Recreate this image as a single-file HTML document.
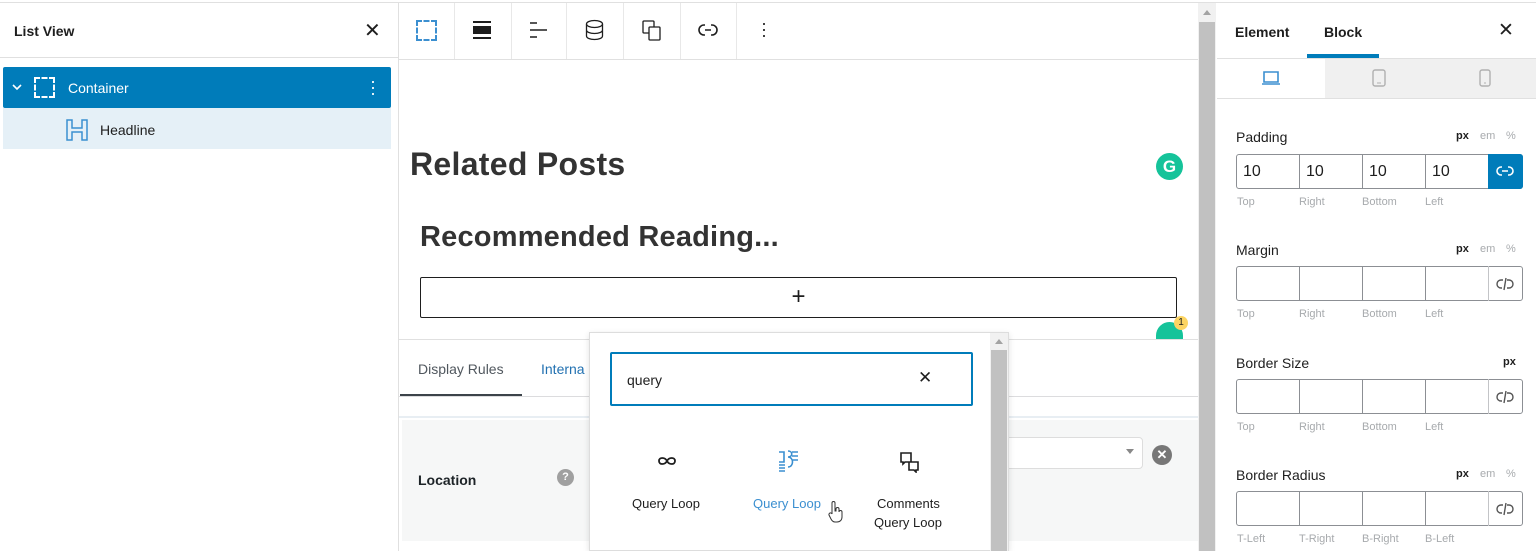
<!DOCTYPE html>
<html><head><meta charset="utf-8"><style>
*{box-sizing:border-box;margin:0;padding:0}
body{width:1536px;height:551px;overflow:hidden;background:#fff;font-family:"Liberation Sans",sans-serif;color:#1e1e1e;position:relative}
.a{position:absolute}
.lbl{position:absolute;font-size:11px;color:#a7aaad}
.unit{position:absolute;font-size:11px;color:#a7aaad}
</style></head><body>
<div class="a" style="left:0;top:2px;width:1536px;height:1px;background:#e0e0e0"></div>
<div class="a" style="left:14px;top:23px;font-size:14px;font-weight:bold;color:#1e1e1e">List View</div>
<div class="a" style="left:364px;top:18px;font-size:20px">✕</div>
<div class="a" style="left:0;top:57px;width:399px;height:1px;background:#e0e0e0"></div>
<div class="a" style="left:3px;top:67px;width:388px;height:41px;background:#007cba;border-radius:2px"></div>
<svg class="a" style="left:10px;top:80px" width="14" height="14"><path d="M3 5l4 4 4-4" stroke="#fff" stroke-width="1.6" fill="none"/></svg>
<div class="a" style="left:34px;top:77px;width:21px;height:21px;border:2px dashed #fff"></div>
<div class="a" style="left:68px;top:80px;font-size:14px;color:#fff">Container</div>
<div class="a" style="left:370px;top:78px;color:#fff;font-size:18px;line-height:6px;width:4px">·<br>·<br>·</div>
<div class="a" style="left:3px;top:108px;width:388px;height:41px;background:#e5f0f7"></div>
<svg class="a" style="left:66px;top:119px" width="22" height="22"><path d="M1 1h5v8h10V1h5v20h-5v-8H6v8H1z" stroke="#3b8fd0" stroke-width="1.5" fill="none"/></svg>
<div class="a" style="left:100px;top:122px;font-size:14px;color:#1e1e1e">Headline</div>
<div class="a" style="left:398px;top:2px;width:1px;height:549px;background:#e0e0e0"></div>
<div class="a" style="left:399px;top:59px;width:799px;height:1px;background:#e0e0e0"></div>
<div class="a" style="left:454px;top:3px;width:1px;height:56px;background:#e8e8e8"></div>
<div class="a" style="left:511px;top:3px;width:1px;height:56px;background:#e8e8e8"></div>
<div class="a" style="left:566px;top:3px;width:1px;height:56px;background:#e8e8e8"></div>
<div class="a" style="left:623px;top:3px;width:1px;height:56px;background:#e8e8e8"></div>
<div class="a" style="left:680px;top:3px;width:1px;height:56px;background:#e8e8e8"></div>
<div class="a" style="left:736px;top:3px;width:1px;height:56px;background:#e8e8e8"></div>
<div class="a" style="left:416px;top:20px;width:21px;height:21px;border:2px dashed #3b8fd0"></div>
<svg class="a" style="left:473px;top:20px" width="18" height="20"><rect x="0" y="1" width="18" height="2" fill="#1e1e1e"/><rect x="0" y="6" width="18" height="8" fill="#1e1e1e"/><rect x="0" y="17" width="18" height="2" fill="#1e1e1e"/></svg>
<svg class="a" style="left:529px;top:20px" width="18" height="20"><path d="M1 3h7M1 10h17M1 17h7" stroke="#1e1e1e" stroke-width="1.6"/></svg>
<svg class="a" style="left:585px;top:19px" width="19" height="22"><ellipse cx="9.5" cy="5" rx="8" ry="3.5" stroke="#1e1e1e" stroke-width="1.3" fill="none"/><path d="M1.5 5v12c0 2 3.5 3.5 8 3.5s8-1.5 8-3.5V5M1.5 11c0 2 3.5 3.5 8 3.5s8-1.5 8-3.5" stroke="#1e1e1e" stroke-width="1.3" fill="none"/></svg>
<svg class="a" style="left:642px;top:20px" width="20" height="21"><rect x="1" y="1" width="11" height="12" rx="1" stroke="#1e1e1e" stroke-width="1.3" fill="none"/><rect x="7" y="7" width="11" height="13" rx="1" stroke="#1e1e1e" stroke-width="1.3" fill="#fff"/></svg>
<svg class="a" style="left:698px;top:23px" width="20" height="14"><path d="M7 2H6a5 5 0 000 10h1M13 2h1a5 5 0 010 10h-1M7 7h6" stroke="#1e1e1e" stroke-width="1.6" fill="none"/></svg>
<div class="a" style="left:761px;top:20px;font-size:18px;line-height:6px;width:4px">·<br>·<br>·</div>
<div class="a" style="left:410px;top:146px;font-size:32px;font-weight:bold;color:#333;letter-spacing:0.3px">Related Posts</div>
<div class="a" style="left:1156px;top:153px;width:27px;height:27px;border-radius:50%;background:#15c39a;color:#fff;font-weight:bold;text-align:center;line-height:27px;font-size:17px">G</div>
<div class="a" style="left:420px;top:221px;font-size:29px;font-weight:bold;color:#333;letter-spacing:0.2px">Recommended Reading...</div>
<div class="a" style="left:420px;top:277px;width:757px;height:41px;border:1px solid #1e1e1e;border-radius:2px;text-align:center;font-size:24px;line-height:38px">+</div>
<div class="a" style="left:1156px;top:322px;width:27px;height:18px;border-radius:14px 14px 0 0;background:#15c39a"></div>
<div class="a" style="left:1174px;top:316px;width:14px;height:14px;border-radius:50%;background:#fcd462;font-size:10px;text-align:center;line-height:14px">1</div>
<div class="a" style="left:399px;top:339px;width:799px;height:1px;background:#e0e0e0"></div>
<div class="a" style="left:418px;top:361px;font-size:14px;color:#50575e">Display Rules</div>
<div class="a" style="left:541px;top:361px;font-size:14px;color:#2271b1">Interna</div>
<div class="a" style="left:400px;top:394px;width:122px;height:2px;background:#3c434a"></div>
<div class="a" style="left:399px;top:396px;width:799px;height:1px;background:#dcdcde"></div>
<div class="a" style="left:399px;top:416px;width:799px;height:2px;background:#e8eef3"></div>
<div class="a" style="left:402px;top:420px;width:796px;height:121px;background:#f6f7f7"></div>
<div class="a" style="left:418px;top:472px;font-size:14px;font-weight:bold;color:#1d2327">Location</div>
<div class="a" style="left:557px;top:469px;width:17px;height:17px;border-radius:50%;background:#a0a0a0;color:#fff;font-size:11px;text-align:center;line-height:17px;font-weight:bold">?</div>
<div class="a" style="left:990px;top:437px;width:153px;height:32px;background:#fff;border:1px solid #ddd;border-radius:4px"></div>
<div class="a" style="left:1126px;top:449px;width:0;height:0;border-left:4px solid transparent;border-right:4px solid transparent;border-top:5px solid #888"></div>
<div class="a" style="left:1152px;top:445px;width:20px;height:20px;border-radius:50%;background:#777;color:#fff;text-align:center;line-height:20px;font-size:13px;font-weight:bold">✕</div>
<div class="a" style="left:1198px;top:3px;width:18px;height:548px;background:#f1f1f1"></div>
<div class="a" style="left:1199px;top:22px;width:16px;height:529px;background:#c1c1c1"></div>
<div class="a" style="left:1203px;top:10px;width:0;height:0;border-left:4px solid transparent;border-right:4px solid transparent;border-bottom:5px solid #a3a3a3"></div>
<div class="a" style="left:589px;top:332px;width:420px;height:219px;background:#fff;border:1px solid #ddd;box-shadow:0 2px 6px rgba(0,0,0,.12)"></div>
<div class="a" style="left:610px;top:352px;width:363px;height:54px;border:2px solid #007cba;border-radius:2px"></div>
<div class="a" style="left:627px;top:372px;font-size:14px;color:#1e1e1e">query</div>
<div class="a" style="left:918px;top:368px;font-size:17px">✕</div>
<div class="a" style="left:990px;top:333px;width:18px;height:218px;background:#f1f1f1"></div>
<div class="a" style="left:991px;top:350px;width:16px;height:201px;background:#c1c1c1"></div>
<div class="a" style="left:995px;top:339px;width:0;height:0;border-left:4px solid transparent;border-right:4px solid transparent;border-bottom:5px solid #a3a3a3"></div>
<svg class="a" style="left:657px;top:453px" width="22" height="16"><path d="M10 8c-2-4-8-4-8 0s6 4 8 0 8-4 8 0-6 4-8 0" stroke="#1e1e1e" stroke-width="1.8" fill="none"/></svg>
<div class="a" style="left:632px;top:496px;font-size:13px;color:#1e1e1e">Query Loop</div>
<svg class="a" style="left:777px;top:449px" width="24" height="26"><path d="M2 3h5v10H2M2 16h6M2 19h6M2 22h6M11 2c5 0 5 6 0 6M11 8c6 0 6 10 0 10M15 3h6M15 7h6M15 11h6" stroke="#3b8fd0" stroke-width="1.6" fill="none"/></svg>
<div class="a" style="left:753px;top:496px;font-size:13px;color:#3b8fd0">Query Loop</div>
<svg class="a" style="left:827px;top:500px" width="16" height="24"><path d="M5 14V3a1.5 1.5 0 013 0v8h1V9a1.5 1.5 0 013 0v3a1.5 1.5 0 013 0v5c0 3-2 5-5 5H8c-2 0-3-1-4-3l-2-4a1.5 1.5 0 013-1z" stroke="#333" stroke-width="1" fill="#fff"/></svg>
<svg class="a" style="left:899px;top:451px" width="22" height="22"><path d="M2 2h10v9H6l-2 2v-2H2zM10 11h9v8h-2v2l-2-2h-5z" stroke="#1e1e1e" stroke-width="1.6" fill="#fff"/></svg>
<div class="a" style="left:877px;top:496px;font-size:13px;color:#1e1e1e">Comments</div>
<div class="a" style="left:874px;top:515px;font-size:13px;color:#1e1e1e">Query Loop</div>
<div class="a" style="left:1235px;top:24px;font-size:14px;font-weight:bold;color:#1e1e1e">Element</div>
<div class="a" style="left:1324px;top:24px;font-size:14px;font-weight:bold;color:#1e1e1e">Block</div>
<div class="a" style="left:1498px;top:19px;font-size:19px">✕</div>
<div class="a" style="left:1307px;top:54px;width:72px;height:4px;background:#007cba"></div>
<div class="a" style="left:1217px;top:58px;width:319px;height:1px;background:#e0e0e0"></div>
<div class="a" style="left:1325px;top:59px;width:211px;height:40px;background:#f0f0f0"></div>
<div class="a" style="left:1217px;top:98px;width:319px;height:1px;background:#e0e0e0"></div>
<svg class="a" style="left:1261px;top:70px" width="20" height="16"><path d="M3 2h14v10H3zM1 14h18" stroke="#3b8fd0" stroke-width="1.6" fill="none"/></svg>
<svg class="a" style="left:1372px;top:69px" width="14" height="18"><rect x="1" y="1" width="12" height="16" rx="2" stroke="#b0b0b0" stroke-width="1.4" fill="none"/><path d="M5 14h4" stroke="#b0b0b0"/></svg>
<svg class="a" style="left:1479px;top:69px" width="12" height="18"><rect x="1" y="1" width="10" height="16" rx="2" stroke="#b0b0b0" stroke-width="1.4" fill="none"/><path d="M5 14h2" stroke="#b0b0b0"/></svg>
<div class="a" style="left:1236px;top:129px;font-size:14px;color:#1e1e1e">Padding</div>
<div class="unit" style="left:1456px;top:130px;color:#1e1e1e;font-weight:bold">px</div><div class="unit" style="left:1480px;top:130px">em</div><div class="unit" style="left:1506px;top:130px">%</div>
<div class="a" style="left:1236px;top:154px;width:287px;height:35px;border:1px solid #8c8f94;border-radius:3px"></div>
<div class="a" style="left:1299px;top:154px;width:1px;height:35px;background:#8c8f94"></div>
<div class="a" style="left:1362px;top:154px;width:1px;height:35px;background:#8c8f94"></div>
<div class="a" style="left:1425px;top:154px;width:1px;height:35px;background:#8c8f94"></div>
<div class="a" style="left:1488px;top:154px;width:35px;height:35px;background:#007cba;border-radius:0 3px 3px 0"></div>
<svg class="a" style="left:1496px;top:165px" width="18" height="12"><path d="M6 2H5a4 4 0 000 8h1M12 2h1a4 4 0 010 8h-1M6 6h6" stroke="#fff" stroke-width="1.6" fill="none"/></svg>
<div class="a" style="left:1243px;top:163px;font-size:16px">10</div><div class="a" style="left:1306px;top:163px;font-size:16px">10</div><div class="a" style="left:1369px;top:163px;font-size:16px">10</div><div class="a" style="left:1432px;top:163px;font-size:16px">10</div>
<div class="lbl" style="left:1237px;top:196px">Top</div><div class="lbl" style="left:1299px;top:196px">Right</div><div class="lbl" style="left:1362px;top:196px">Bottom</div><div class="lbl" style="left:1425px;top:196px">Left</div>
<div class="a" style="left:1236px;top:242px;font-size:14px">Margin</div>
<div class="unit" style="left:1456px;top:243px;color:#1e1e1e;font-weight:bold">px</div><div class="unit" style="left:1480px;top:243px">em</div><div class="unit" style="left:1506px;top:243px">%</div>
<div class="a" style="left:1236px;top:266px;width:287px;height:35px;border:1px solid #8c8f94;border-radius:3px"></div>
<div class="a" style="left:1299px;top:266px;width:1px;height:35px;background:#8c8f94"></div><div class="a" style="left:1362px;top:266px;width:1px;height:35px;background:#8c8f94"></div><div class="a" style="left:1425px;top:266px;width:1px;height:35px;background:#8c8f94"></div><div class="a" style="left:1488px;top:266px;width:1px;height:35px;background:#c3c4c7"></div>
<svg class="a" style="left:1496px;top:277px" width="18" height="14"><path d="M7 3H5a4 4 0 000 8h1M11 3h2a4 4 0 010 8h-2M10 1L8 13" stroke="#555" stroke-width="1.4" fill="none"/></svg>
<div class="lbl" style="left:1237px;top:308px">Top</div><div class="lbl" style="left:1299px;top:308px">Right</div><div class="lbl" style="left:1362px;top:308px">Bottom</div><div class="lbl" style="left:1425px;top:308px">Left</div>
<div class="a" style="left:1236px;top:355px;font-size:14px">Border Size</div>
<div class="unit" style="left:1503px;top:356px;color:#1e1e1e;font-weight:bold">px</div>
<div class="a" style="left:1236px;top:379px;width:287px;height:35px;border:1px solid #8c8f94;border-radius:3px"></div>
<div class="a" style="left:1299px;top:379px;width:1px;height:35px;background:#8c8f94"></div><div class="a" style="left:1362px;top:379px;width:1px;height:35px;background:#8c8f94"></div><div class="a" style="left:1425px;top:379px;width:1px;height:35px;background:#8c8f94"></div><div class="a" style="left:1488px;top:379px;width:1px;height:35px;background:#c3c4c7"></div>
<svg class="a" style="left:1496px;top:390px" width="18" height="14"><path d="M7 3H5a4 4 0 000 8h1M11 3h2a4 4 0 010 8h-2M10 1L8 13" stroke="#555" stroke-width="1.4" fill="none"/></svg>
<div class="lbl" style="left:1237px;top:421px">Top</div><div class="lbl" style="left:1299px;top:421px">Right</div><div class="lbl" style="left:1362px;top:421px">Bottom</div><div class="lbl" style="left:1425px;top:421px">Left</div>
<div class="a" style="left:1236px;top:467px;font-size:14px">Border Radius</div>
<div class="unit" style="left:1456px;top:468px;color:#1e1e1e;font-weight:bold">px</div><div class="unit" style="left:1480px;top:468px">em</div><div class="unit" style="left:1506px;top:468px">%</div>
<div class="a" style="left:1236px;top:491px;width:287px;height:35px;border:1px solid #8c8f94;border-radius:3px"></div>
<div class="a" style="left:1299px;top:491px;width:1px;height:35px;background:#8c8f94"></div><div class="a" style="left:1362px;top:491px;width:1px;height:35px;background:#8c8f94"></div><div class="a" style="left:1425px;top:491px;width:1px;height:35px;background:#8c8f94"></div><div class="a" style="left:1488px;top:491px;width:1px;height:35px;background:#c3c4c7"></div>
<svg class="a" style="left:1496px;top:502px" width="18" height="14"><path d="M7 3H5a4 4 0 000 8h1M11 3h2a4 4 0 010 8h-2M10 1L8 13" stroke="#555" stroke-width="1.4" fill="none"/></svg>
<div class="lbl" style="left:1237px;top:533px">T-Left</div><div class="lbl" style="left:1299px;top:533px">T-Right</div><div class="lbl" style="left:1362px;top:533px">B-Right</div><div class="lbl" style="left:1425px;top:533px">B-Left</div>
</body></html>
